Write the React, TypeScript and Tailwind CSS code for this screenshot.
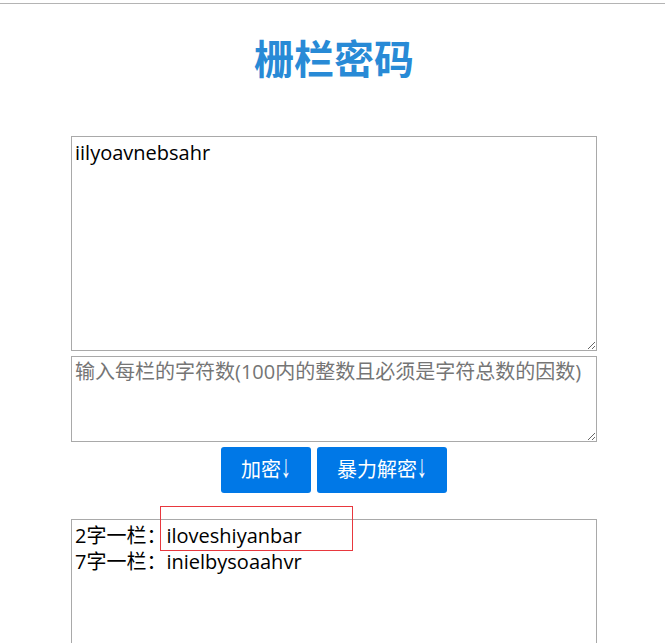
import { useState } from "react";

const font = "font-['Open_Sans','Noto_Sans_CJK_SC',sans-serif]";

function Arrow() {
  return (
    <span className="inline-block w-[10px] text-center scale-y-[1.6] origin-[50%_80%] font-['Liberation_Sans','DejaVu_Sans',sans-serif]">
      ↓
    </span>
  );
}

export default function App() {
  const [plain, setPlain] = useState("iilyoavnebsahr");
  const [size, setSize] = useState("");
  const result = "2字一栏：iloveshiyanbar\n7字一栏：inielbysoaahvr";

  return (
    <div className={`pt-[3px] bg-white min-h-screen ${font}`}>
      <div className="border-t border-[#b4b4b4] pl-[3px]">
        <h1 className="mt-[29px] text-center text-[40px] leading-[48px] font-bold text-[#288ad6] font-['Noto_Sans_CJK_SC',sans-serif]">
          栅栏密码
        </h1>

        <div className="w-[526px] mx-auto mt-[55px]">
          <textarea
            className="block w-full h-[215px] border border-[#a9a9a9] px-[3px] pt-[3px] pb-[2px] text-[20px] leading-[26px] text-black outline-none"
            value={plain}
            onChange={(e) => setPlain(e.target.value)}
          />
          <textarea
            className="block w-full h-[86px] mt-[5px] border border-[#a9a9a9] px-[3px] py-[2px] text-[20px] leading-[26px] text-black outline-none placeholder:text-[#757575]"
            placeholder="输入每栏的字符数(100内的整数且必须是字符总数的因数)"
            value={size}
            onChange={(e) => setSize(e.target.value)}
          />

          <div className="flex justify-center gap-[6px] mt-[5px]">
            <button className="h-[46px] px-[20px] rounded-[3px] bg-[#0078e7] text-white text-[20px] leading-[26px]">
              加密
              <Arrow />
            </button>
            <button className="h-[46px] px-[20px] rounded-[3px] bg-[#0078e7] text-white text-[20px] leading-[26px]">
              暴力解密
              <Arrow />
            </button>
          </div>

          <div className="relative mt-[26px]">
            <textarea
              readOnly
              className="block w-full h-[215px] border border-[#a9a9a9] px-[3px] pt-[3px] text-[20px] leading-[26px] text-black outline-none resize-none"
              value={result}
            />
            {/* annotation box */}
            <div className="absolute left-[89px] top-[-13px] w-[193px] h-[45px] border border-[#e8383e]" />
          </div>
        </div>
      </div>
    </div>
  );
}
